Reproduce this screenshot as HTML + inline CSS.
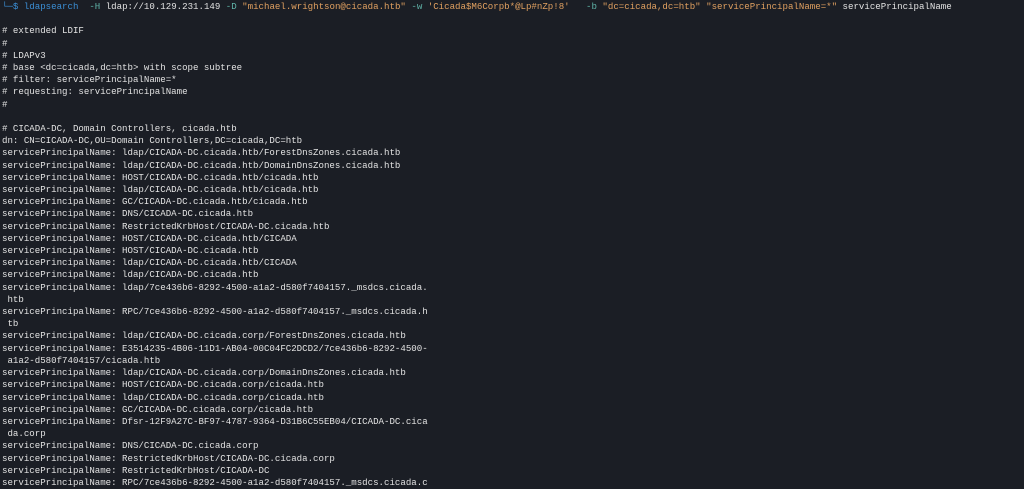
<!DOCTYPE html>
<html><head><meta charset="utf-8"><style>
html,body{margin:0;padding:0;background:#1b1e25;width:1024px;height:485px;overflow:hidden}
pre{margin:0;position:absolute;left:2px;top:1px;font-family:"Liberation Mono","DejaVu Sans Mono",monospace;font-size:9.1px;line-height:12.2px;color:#e2e2e2;white-space:pre}
.b{color:#3b8fd6}.c{color:#5fb3a8}.o{color:#e0a060}.p{color:#3b8fd6}
</style></head><body>
<pre><span class="p">└─$</span> <span class="b">ldapsearch</span>  <span class="c">-H</span> ldap://10.129.231.149 <span class="c">-D</span> <span class="o">"michael.wrightson@cicada.htb"</span> <span class="c">-w</span> <span class="o">'Cicada$M6Corpb*@Lp#nZp!8'</span>   <span class="c">-b</span> <span class="o">"dc=cicada,dc=htb"</span> <span class="o">"servicePrincipalName=*"</span> servicePrincipalName

# extended LDIF
#
# LDAPv3
# base &lt;dc=cicada,dc=htb&gt; with scope subtree
# filter: servicePrincipalName=*
# requesting: servicePrincipalName
#

# CICADA-DC, Domain Controllers, cicada.htb
dn: CN=CICADA-DC,OU=Domain Controllers,DC=cicada,DC=htb
servicePrincipalName: ldap/CICADA-DC.cicada.htb/ForestDnsZones.cicada.htb
servicePrincipalName: ldap/CICADA-DC.cicada.htb/DomainDnsZones.cicada.htb
servicePrincipalName: HOST/CICADA-DC.cicada.htb/cicada.htb
servicePrincipalName: ldap/CICADA-DC.cicada.htb/cicada.htb
servicePrincipalName: GC/CICADA-DC.cicada.htb/cicada.htb
servicePrincipalName: DNS/CICADA-DC.cicada.htb
servicePrincipalName: RestrictedKrbHost/CICADA-DC.cicada.htb
servicePrincipalName: HOST/CICADA-DC.cicada.htb/CICADA
servicePrincipalName: HOST/CICADA-DC.cicada.htb
servicePrincipalName: ldap/CICADA-DC.cicada.htb/CICADA
servicePrincipalName: ldap/CICADA-DC.cicada.htb
servicePrincipalName: ldap/7ce436b6-8292-4500-a1a2-d580f7404157._msdcs.cicada.
 htb
servicePrincipalName: RPC/7ce436b6-8292-4500-a1a2-d580f7404157._msdcs.cicada.h
 tb
servicePrincipalName: ldap/CICADA-DC.cicada.corp/ForestDnsZones.cicada.htb
servicePrincipalName: E3514235-4B06-11D1-AB04-00C04FC2DCD2/7ce436b6-8292-4500-
 a1a2-d580f7404157/cicada.htb
servicePrincipalName: ldap/CICADA-DC.cicada.corp/DomainDnsZones.cicada.htb
servicePrincipalName: HOST/CICADA-DC.cicada.corp/cicada.htb
servicePrincipalName: ldap/CICADA-DC.cicada.corp/cicada.htb
servicePrincipalName: GC/CICADA-DC.cicada.corp/cicada.htb
servicePrincipalName: Dfsr-12F9A27C-BF97-4787-9364-D31B6C55EB04/CICADA-DC.cica
 da.corp
servicePrincipalName: DNS/CICADA-DC.cicada.corp
servicePrincipalName: RestrictedKrbHost/CICADA-DC.cicada.corp
servicePrincipalName: RestrictedKrbHost/CICADA-DC
servicePrincipalName: RPC/7ce436b6-8292-4500-a1a2-d580f7404157._msdcs.cicada.c</pre>
</body></html>
